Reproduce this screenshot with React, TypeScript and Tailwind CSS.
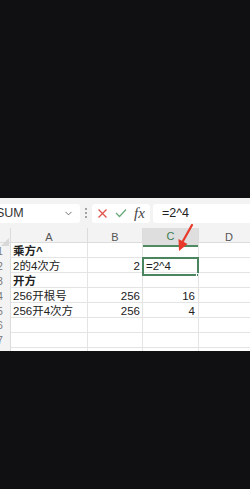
import { ChevronDown } from 'lucide-react';

const cols = ['A', 'B', 'C', 'D'];

const rows: { a: string; b: string; c: string; bold?: boolean; active?: boolean }[] = [
  { a: '乘方^', b: '', c: '', bold: true },
  { a: '2的4次方', b: '2', c: '=2^4', active: true },
  { a: '开方', b: '', c: '', bold: true },
  { a: '256开根号', b: '256', c: '16' },
  { a: '256开4次方', b: '256', c: '4' },
  { a: '', b: '', c: '' },
  { a: '', b: '', c: '' },
  { a: '', b: '', c: '' },
];

const gridCols = 'grid grid-cols-[21px_77px_55px_56px_61px]';

export default function App() {
  return (
    <div
      className="w-[250px] h-[489px] bg-[#101012] flex flex-col overflow-hidden"
      style={{ fontFamily: '"Liberation Sans", "Noto Sans CJK SC", sans-serif' }}
    >
      <div className="h-[198px] shrink-0" />

      <div className="relative h-[153px] shrink-0 bg-white overflow-hidden">
        <div className="w-[260px] -ml-[10px]">
          {/* Formula bar */}
          <div className="h-[30px] bg-[#f3f3f3] flex items-center">
            <div className="ml-[4px] w-[86px] h-[19px] bg-white rounded-[3px] flex items-center justify-between pl-[2px] pr-[6px]">
              <span className="text-[12.5px] text-[#333]">SUM</span>
              <ChevronDown className="w-[11px] h-[11px] text-[#666]" strokeWidth={2} />
            </div>
            <div className="w-[12px] flex flex-col items-center gap-[2px]">
              <span className="w-[2px] h-[2px] rounded-full bg-[#888]" />
              <span className="w-[2px] h-[2px] rounded-full bg-[#888]" />
              <span className="w-[2px] h-[2px] rounded-full bg-[#888]" />
            </div>
            <div className="w-[58px] h-[19px] bg-white rounded-[3px] flex items-center pl-[5px] gap-[7px]">
              <svg width="11" height="11" viewBox="0 0 11 11">
                <path d="M1.5 1.5 L9.5 9.5 M9.5 1.5 L1.5 9.5" stroke="#e0524a" strokeWidth="1.3" fill="none" />
              </svg>
              <svg width="12" height="10" viewBox="0 0 12 10">
                <path d="M1 5 L4.5 8.5 L11 1.5" stroke="#6aab7c" strokeWidth="1.3" fill="none" />
              </svg>
              <span
                className="text-[15px] italic text-[#444] leading-none"
                style={{ fontFamily: '"Liberation Serif", serif' }}
              >
                fx
              </span>
            </div>
            <div className="ml-[3px] flex-1 h-[19px] bg-white rounded-l-[3px] flex items-center pl-[9px]">
              <span className="text-[12.5px] text-[#222]">=2^4</span>
            </div>
          </div>

          {/* Column headers */}
          <div className={`${gridCols} h-[15px] bg-[#f3f3f3] border-b border-[#dcdcdc]`}>
            <div className="border-r border-[#dcdcdc] relative">
              <svg className="absolute right-[1px] bottom-[1px]" width="8" height="8" viewBox="0 0 8 8">
                <path d="M8 0 L8 8 L0 8 Z" fill="#d8d8d8" />
              </svg>
            </div>
            {cols.map((c) => (
              <div
                key={c}
                className={`flex items-center justify-center text-[11px] border-r border-[#dcdcdc] ${
                  c === 'C' ? 'bg-[#dedede] text-[#3d7a52] border-b-2 border-b-[#4f8a62]' : 'text-[#555]'
                }`}
              >
                {c}
              </div>
            ))}
          </div>

          {/* Rows */}
          {rows.map((r, i) => (
            <div key={i} className={`${gridCols} h-[15px] border-b border-[#e4e4e4]`}>
              <div className="bg-[#f3f3f3] border-r border-[#dcdcdc] flex items-center justify-center text-[10px] text-[#777]">
                {i + 1}
              </div>
              <div
                className={`flex items-center pl-[2px] text-[11.5px] text-[#222] whitespace-nowrap border-r border-[#e4e4e4] ${
                  r.bold ? 'font-bold' : ''
                }`}
              >
                {r.a}
              </div>
              <div className="flex items-center justify-end pr-[2px] text-[11.5px] text-[#222] border-r border-[#e4e4e4]">
                {r.b}
              </div>
              <div
                className={`relative flex items-center text-[11.5px] text-[#222] border-r border-[#e4e4e4] ${
                  r.active ? 'justify-start pl-[3px]' : 'justify-end pr-[3px]'
                }`}
              >
                {r.c}
                {r.active && (
                  <>
                    <div className="absolute -left-[1px] -top-[1px] -right-[1px] -bottom-[1px] border-2 border-[#4a8560]" />
                    <div className="absolute -right-[2px] -bottom-[2px] w-[4px] h-[4px] bg-[#4a8560] border border-white" />
                  </>
                )}
              </div>
              <div />
            </div>
          ))}
        </div>

        {/* Red arrow annotation */}
        <svg className="absolute left-[172px] top-[26px]" width="26" height="30" viewBox="0 0 26 30">
          <path d="M20 1 L11 17" stroke="#e8392b" strokeWidth="2.2" strokeLinecap="round" fill="none" />
          <path d="M7 27 L6.5 15 L15.5 20 Z" fill="#e8392b" />
        </svg>
      </div>

      <div className="flex-1" />
    </div>
  );
}
